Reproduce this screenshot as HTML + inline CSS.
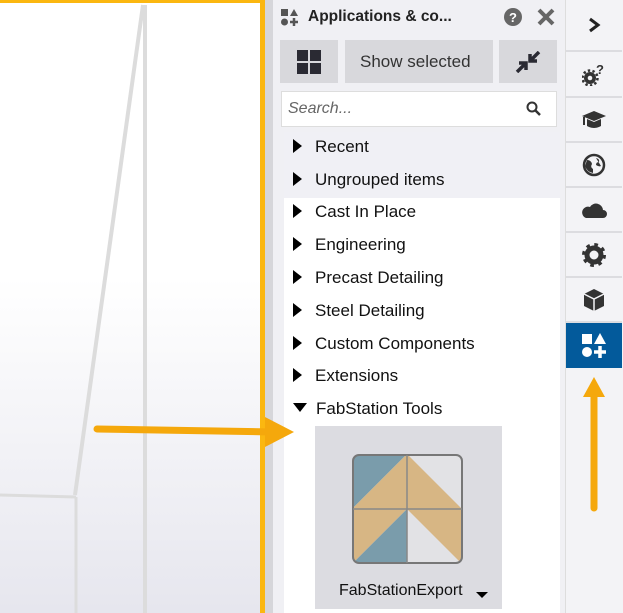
<!DOCTYPE html>
<html><head><style>
*{margin:0;padding:0;box-sizing:border-box}
body{width:623px;height:613px;position:relative;overflow:hidden;font-family:"Liberation Sans",sans-serif;background:#f0f0f4}
.vp{position:absolute;left:0;top:0;width:265px;height:613px;background:linear-gradient(#fff 0,#fff 45%,#e6e6ee 100%);border-top:3px solid #fbb710;border-right:5px solid #fbb710}
.strip{position:absolute;left:265px;top:0;width:8px;height:613px;background:#d6d6da}
.panel{position:absolute;left:273px;top:0;width:290px;height:613px;background:#f0f0f4}
.title{position:absolute;left:308px;top:8px;font-size:15.5px;font-weight:bold;color:#222}
.btn{position:absolute;top:40px;height:43px;background:#d8d8dc}
.search{position:absolute;left:281px;top:91px;width:276px;height:36px;background:#fff;border:1px solid #ddd}
.search span{position:absolute;left:6px;top:8px;font-size:16px;font-style:italic;color:#666}
.list{position:absolute;left:284px;top:132px;width:276px;height:481px;background:#fff}
.row{position:absolute;left:293px;font-size:17px;color:#111}
.tri{display:inline-block;width:0;height:0;border-top:7px solid transparent;border-bottom:7px solid transparent;border-left:9px solid #000;margin-right:13px;vertical-align:-1px}
.side{position:absolute;left:565px;top:0;width:58px;height:613px;background:#f3f3f6;border-left:1px solid #ddd}
.sb{position:absolute;left:566px;width:56px;border-bottom:2px solid #dcdce0;display:flex;align-items:center;justify-content:center}
</style></head><body>
<div class="vp"></div>
<svg style="position:absolute;left:0;top:0" width="265" height="613">
<line x1="143" y1="5" x2="75" y2="495" stroke="#dcdcdc" stroke-width="4"/>
<line x1="145" y1="5" x2="145" y2="613" stroke="#dcdcdc" stroke-width="4"/>
<line x1="0" y1="495" x2="76" y2="497" stroke="#dcdcdc" stroke-width="3"/>
<line x1="76" y1="497" x2="76" y2="613" stroke="#dcdcdc" stroke-width="3"/>
<line x1="97" y1="429" x2="275" y2="432" stroke="#f5a80c" stroke-width="7" stroke-linecap="round"/>
</svg>
<div class="strip"></div>
<div class="panel"></div>
<svg style="position:absolute;left:281px;top:9px" width="18" height="18"><rect x="0" y="0" width="7" height="7" fill="#555"/><path d="M13 0L17 7H9z" fill="#555"/><circle cx="3.5" cy="13" r="3.5" fill="#555"/><path d="M13 9v8M9 13h8" stroke="#555" stroke-width="2.5"/></svg>
<div class="title">Applications &amp; co...</div>
<svg style="position:absolute;left:503px;top:7px" width="20" height="20"><circle cx="10" cy="10" r="9" fill="#666"/><text x="10" y="15" font-size="13" font-weight="bold" fill="#fff" text-anchor="middle" font-family="Liberation Sans">?</text></svg>
<svg style="position:absolute;left:537px;top:8px" width="18" height="18"><path d="M2 2L16 16M16 2L2 16" stroke="#666" stroke-width="4"/></svg>
<div class="btn" style="left:280px;width:58px"></div>
<svg style="position:absolute;left:297px;top:50px" width="24" height="24"><rect x="0" y="0" width="11" height="11" fill="#2a2a33"/><rect x="13" y="0" width="11" height="11" fill="#2a2a33"/><rect x="0" y="13" width="11" height="11" fill="#2a2a33"/><rect x="13" y="13" width="11" height="11" fill="#2a2a33"/></svg>
<div class="btn" style="left:345px;width:148px"><span style="position:absolute;left:15px;top:12px;font-size:17px;color:#333">Show selected</span></div>
<div class="btn" style="left:499px;width:58px"><svg style="position:absolute;left:16px;top:11px" width="26" height="22"><path d="M24 1L16 9M15 3v7h7" stroke="#2a2a33" stroke-width="3.5" fill="none"/><path d="M2 21L10 13M4 12h7v7" stroke="#2a2a33" stroke-width="3.5" fill="none"/></svg></div>
<div class="search"><span>Search...</span><svg style="position:absolute;left:244px;top:9px" width="16" height="16"><circle cx="6" cy="6" r="4.5" stroke="#333" stroke-width="2" fill="none"/><path d="M9.5 9.5L14 14" stroke="#333" stroke-width="2.5"/></svg></div>
<div class="list"></div>
<div style="position:absolute;left:284px;top:132px;width:276px;height:66px;background:#f0f0f5"></div>
<div class="row" style="top:137px"><span class="tri"></span>Recent</div>
<div class="row" style="top:170px"><span class="tri"></span>Ungrouped items</div>
<div class="row" style="top:202px"><span class="tri"></span>Cast In Place</div>
<div class="row" style="top:235px"><span class="tri"></span>Engineering</div>
<div class="row" style="top:268px"><span class="tri"></span>Precast Detailing</div>
<div class="row" style="top:301px"><span class="tri"></span>Steel Detailing</div>
<div class="row" style="top:334px"><span class="tri"></span>Custom Components</div>
<div class="row" style="top:366px"><span class="tri"></span>Extensions</div>
<div class="row" style="top:399px"><span style="display:inline-block;width:0;height:0;border-left:7px solid transparent;border-right:7px solid transparent;border-top:9px solid #000;margin-right:9px;vertical-align:2px"></span>FabStation Tools</div>
<div style="position:absolute;left:315px;top:426px;width:187px;height:183px;background:#dcdce1"></div>
<svg style="position:absolute;left:352px;top:454px" width="111" height="110">
<clipPath id="c"><rect x="1" y="1" width="109" height="108" rx="6"/></clipPath>
<g clip-path="url(#c)">
<rect x="0" y="0" width="111" height="110" fill="#e2e2e5"/>
<path d="M0 0H55L0 55z" fill="#7a9cab"/>
<path d="M55 0L0 55H55z" fill="#d7b684"/>
<path d="M55 0L110 55H55z" fill="#d7b684"/>
<path d="M0 55H55L0 110z" fill="#d7b684"/>
<path d="M55 55V110H0z" fill="#7a9cab"/>
<path d="M55 55H110V110z" fill="#d7b684"/>
</g>
<rect x="1" y="1" width="109" height="108" rx="6" fill="none" stroke="#777" stroke-width="2"/>
<path d="M55 1V109M1 55H110" stroke="#888" stroke-width="1.5"/>
</svg>
<div style="position:absolute;left:339px;top:582px;font-size:16px;color:#111">FabStationExport</div>
<div style="position:absolute;left:476px;top:592px;width:0;height:0;border-left:6px solid transparent;border-right:6px solid transparent;border-top:6px solid #000"></div>
<svg style="position:absolute;left:262px;top:415px" width="35" height="34"><path d="M3 2L32 17L3 32z" fill="#f5a80c"/></svg>
<div class="side"></div>
<div class="sb" style="top:0;height:52px"><svg width="14" height="16"><path d="M3 2L11 8L3 14" stroke="#222" stroke-width="3" fill="none"/></svg></div>
<div class="sb" style="top:52px;height:46px"><svg width="24" height="24"><circle cx="8" cy="16" r="6" fill="#333"/><circle cx="8" cy="16" r="7.5" fill="none" stroke="#333" stroke-width="2.5" stroke-dasharray="2.4 2.3"/><circle cx="8" cy="16" r="2.3" fill="#f3f3f6"/><text x="14" y="12" font-size="13" font-weight="bold" fill="#333" font-family="Liberation Sans">?</text></svg></div>
<div class="sb" style="top:98px;height:45px"><svg width="26" height="22"><path d="M1 7L13 2L25 7L13 12z" fill="#333"/><path d="M6 10v7q7 4 14 0v-7l-7 3z" fill="#333"/><path d="M3 8v8" stroke="#333" stroke-width="2"/></svg></div>
<div class="sb" style="top:143px;height:45px"><svg width="24" height="24"><circle cx="12" cy="12" r="10" fill="none" stroke="#333" stroke-width="2.5"/><path d="M5 7q4 0 5 4q-2 3 1 5l0 4q-6-1-8-7zM14 5q4 1 3 4q-3 0-3 3q3 2 5 1" fill="#333"/></svg></div>
<div class="sb" style="top:188px;height:45px"><svg width="26" height="18"><path d="M5 17h17a4 4 0 0 0 0-8a7 7 0 0 0-13-3a5 5 0 0 0-4 11z" fill="#333"/></svg></div>
<div class="sb" style="top:233px;height:45px"><svg width="24" height="24"><circle cx="12" cy="12" r="7" fill="none" stroke="#333" stroke-width="5"/><circle cx="12" cy="12" r="10" fill="none" stroke="#333" stroke-width="4" stroke-dasharray="3.5 4.35"/></svg></div>
<div class="sb" style="top:278px;height:45px"><svg width="24" height="24"><path d="M12 1L22 6V18L12 23L2 18V6z" fill="#333"/><path d="M2 6L12 11L22 6M12 11V23" stroke="#f3f3f6" stroke-width="1.5" fill="none"/></svg></div>
<div class="sb" style="top:323px;height:45px;background:#035a9b;border-bottom:0"><svg width="26" height="26"><rect x="1" y="1" width="10" height="10" fill="#fff"/><path d="M19 0L25 11H13z" fill="#fff"/><circle cx="6" cy="19" r="5" fill="#fff"/><path d="M19 13v12M13 19h12" stroke="#fff" stroke-width="3.5"/></svg></div>
<svg style="position:absolute;left:580px;top:375px" width="28" height="140"><path d="M14 2L25 22H3z" fill="#f5a80c"/><line x1="14" y1="18" x2="14" y2="133" stroke="#f5a80c" stroke-width="7" stroke-linecap="round"/></svg>
</body></html>
